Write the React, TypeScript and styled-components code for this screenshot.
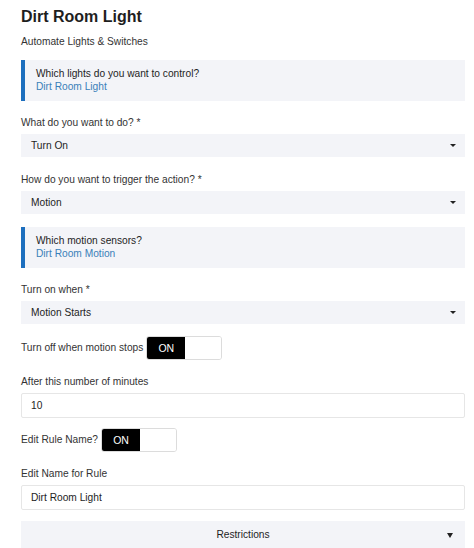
import styled, { createGlobalStyle } from 'styled-components';

const GlobalStyle = createGlobalStyle`
  html, body {
    margin: 0;
    padding: 0;
    background: #ffffff;
  }
  body {
    font-family: "Liberation Sans", Arial, sans-serif;
    color: #222222;
  }
`;

const Page = styled.div`
  width: 444px;
  padding: 7px 0 0 21px;
  display: flex;
  flex-direction: column;
  font-size: 10.2px;
`;

const Title = styled.h1`
  margin: 0;
  font-size: 16px;
  line-height: 19px;
  font-weight: 700;
  color: #1e1e1e;
`;

const Subtitle = styled.div`
  margin-top: 10px;
  line-height: 12px;
  color: #333333;
`;

const InfoBox = styled.div<{ $top: number }>`
  margin-top: ${({ $top }) => $top}px;
  background: #f3f4f8;
  border-left: 4px solid #1d6fbe;
  padding: 7px 11px 8px;
  line-height: 13px;
  color: #1e1e1e;
`;

const LinkText = styled.div`
  color: #3a80b9;
`;

const Label = styled.div<{ $top: number }>`
  margin-top: ${({ $top }) => $top}px;
  line-height: 12px;
  color: #333333;
`;

const Select = styled.div`
  margin-top: 5px;
  height: 23px;
  background: #f3f4f8;
  display: flex;
  align-items: center;
  justify-content: space-between;
  padding: 0 10px;
  line-height: 12px;
  color: #1e1e1e;
`;

const Caret = styled.span`
  width: 0;
  height: 0;
  border-left: 3px solid transparent;
  border-right: 3px solid transparent;
  border-top: 3px solid #222222;
  margin-right: -1px;
`;

const TextInput = styled.div`
  margin-top: 5px;
  height: 25px;
  box-sizing: border-box;
  border: 1px solid #e6e6e6;
  border-radius: 2px;
  display: flex;
  align-items: center;
  padding: 0 9px;
  color: #1e1e1e;
`;

const ToggleRow = styled.div<{ $top: number }>`
  margin-top: ${({ $top }) => $top}px;
  display: flex;
  align-items: center;
  gap: 3px;
  line-height: 12px;
  color: #333333;
`;

const Toggle = styled.div`
  display: flex;
  width: 76px;
  height: 24px;
  box-sizing: border-box;
  border: 1px solid #dcdcdc;
  border-radius: 3px;
  overflow: hidden;
`;

const ToggleOn = styled.div`
  width: 38px;
  background: #000000;
  color: #ffffff;
  display: flex;
  align-items: center;
  justify-content: center;
  font-size: 10.5px;
`;

const ToggleOff = styled.div`
  flex: 1;
  background: #ffffff;
`;

const Restrictions = styled.div`
  margin-top: 11px;
  background: #f3f4f8;
  padding: 8px 10px 10px;
  display: flex;
  align-items: center;
  position: relative;
  justify-content: center;
  line-height: 12px;
  color: #1e1e1e;
`;

const BigCaret = styled.span`
  position: absolute;
  right: 12px;
  top: 12px;
  width: 0;
  height: 0;
  border-left: 3px solid transparent;
  border-right: 3px solid transparent;
  border-top: 5px solid #222222;
`;

function App() {
  return (
    <>
      <GlobalStyle />
      <Page>
        <Title>Dirt Room Light</Title>
        <Subtitle>Automate Lights &amp; Switches</Subtitle>

        <InfoBox $top={12}>
          <div>Which lights do you want to control?</div>
          <LinkText>Dirt Room Light</LinkText>
        </InfoBox>

        <Label $top={16}>What do you want to do? *</Label>
        <Select>
          Turn On
          <Caret />
        </Select>

        <Label $top={17}>How do you want to trigger the action? *</Label>
        <Select>
          Motion
          <Caret />
        </Select>

        <InfoBox $top={13}>
          <div>Which motion sensors?</div>
          <LinkText>Dirt Room Motion</LinkText>
        </InfoBox>

        <Label $top={16}>Turn on when *</Label>
        <Select>
          Motion Starts
          <Caret />
        </Select>

        <ToggleRow $top={12}>
          Turn off when motion stops
          <Toggle>
            <ToggleOn>ON</ToggleOn>
            <ToggleOff />
          </Toggle>
        </ToggleRow>

        <Label $top={16}>After this number of minutes</Label>
        <TextInput>10</TextInput>

        <ToggleRow $top={10}>
          Edit Rule Name?
          <Toggle>
            <ToggleOn>ON</ToggleOn>
            <ToggleOff />
          </Toggle>
        </ToggleRow>

        <Label $top={16}>Edit Name for Rule</Label>
        <TextInput>Dirt Room Light</TextInput>

        <Restrictions>
          Restrictions
          <BigCaret />
        </Restrictions>
      </Page>
    </>
  );
}

export default App;
